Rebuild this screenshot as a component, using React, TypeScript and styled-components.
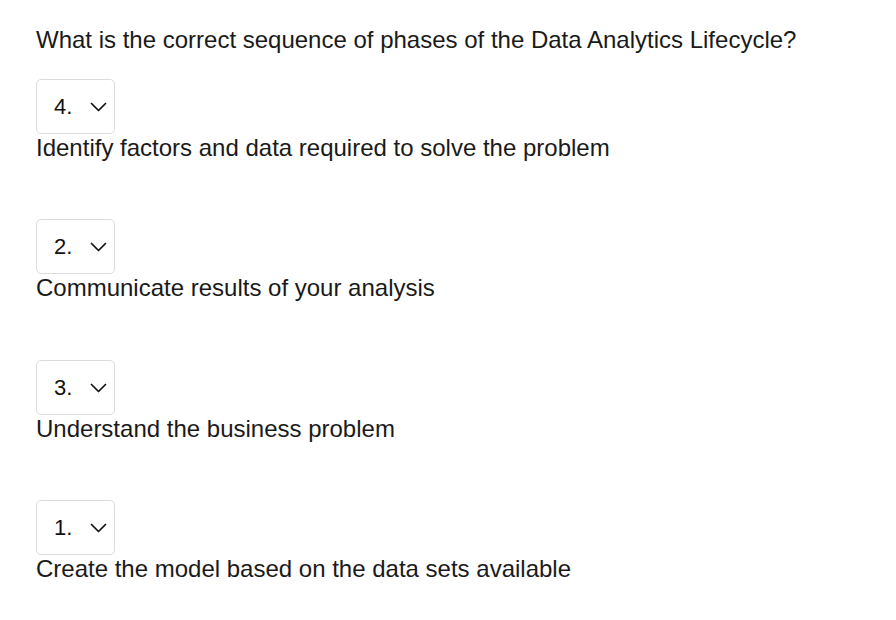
import { createGlobalStyle } from "styled-components";
import styled from "styled-components";

const GlobalStyle = createGlobalStyle`
  html, body {
    margin: 0;
    padding: 0;
    background: #ffffff;
  }
  body {
    font-family: "Liberation Sans", Arial, sans-serif;
    color: #1a1a1a;
  }
`;

const Page = styled.div`
  padding: 26px 36px;
`;

const Question = styled.h1`
  margin: 0 0 25px;
  font-size: 24px;
  font-weight: 400;
  line-height: 28px;
`;

const List = styled.div`
  display: flex;
  flex-direction: column;
  gap: 57.4px;
`;

const Item = styled.div`
  display: flex;
  flex-direction: column;
  align-items: flex-start;
`;

const Select = styled.div`
  box-sizing: border-box;
  width: 79px;
  height: 55px;
  border: 1px solid #dcdcdc;
  border-radius: 5px;
  display: flex;
  align-items: center;
  padding: 1px 0 0 17px;
  gap: 18px;
  font-size: 22px;
  color: #111;
`;

const Label = styled.div`
  font-size: 24px;
  line-height: 28px;
`;

const Chevron = () => (
  <svg width="17" height="10" viewBox="0 0 17 10" fill="none">
    <path d="M1.5 1.5 L8.5 8.5 L15.5 1.5" stroke="#111" strokeWidth="1.7" strokeLinecap="round" strokeLinejoin="round" />
  </svg>
);

const items = [
  { n: "4.", text: "Identify factors and data required to solve the problem" },
  { n: "2.", text: "Communicate results of your analysis" },
  { n: "3.", text: "Understand the business problem" },
  { n: "1.", text: "Create the model based on the data sets available" },
];

export default function App() {
  return (
    <>
      <GlobalStyle />
      <Page>
        <Question>What is the correct sequence of phases of the Data Analytics Lifecycle?</Question>
        <List>
          {items.map((it) => (
            <Item key={it.n}>
              <Select>
                <span>{it.n}</span>
                <Chevron />
              </Select>
              <Label>{it.text}</Label>
            </Item>
          ))}
        </List>
      </Page>
    </>
  );
}
